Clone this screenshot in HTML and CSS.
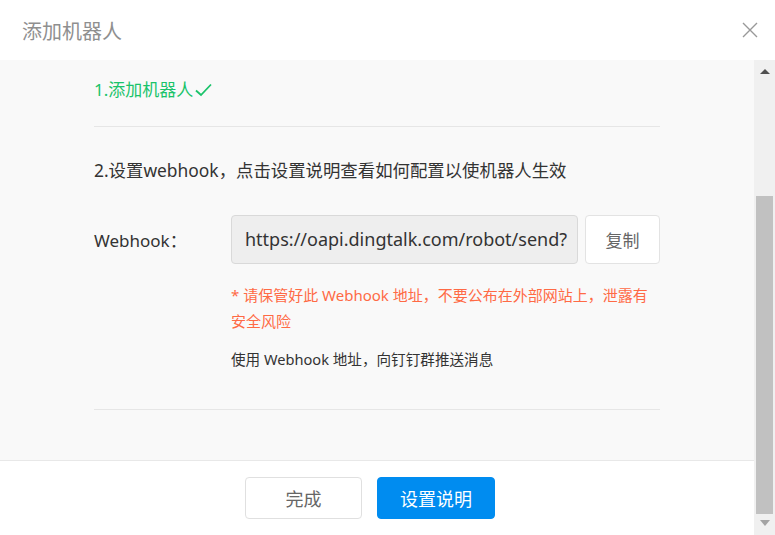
FILE: index.html
```html
<!DOCTYPE html>
<html lang="zh-CN">
<head>
    <meta charset="UTF-8">
    <meta name="viewport" content="width=device-width, initial-scale=1.0">
    <title>添加机器人</title>
    <link rel="stylesheet" href="styles.css">
</head>
<body>
    <div class="dialog">
        <div class="dialog-header">
            <h2 class="dialog-title">添加机器人</h2>
            <button class="close-btn" aria-label="关闭">
                <svg width="16" height="16" viewBox="0 0 16 16">
                    <path d="M1 1 L15 15 M15 1 L1 15" stroke="#999" stroke-width="1.4" fill="none"/>
                </svg>
            </button>
        </div>
        <div class="dialog-wrap">
            <div class="dialog-main">
                <div class="dialog-body">
                    <div class="content">
                        <p class="step step-done">1.添加机器人<svg class="check" width="17" height="14" viewBox="0 0 17 14"><path d="M1 7.5 L6 12 L16 1.5" stroke="#1ac36a" stroke-width="1.8" fill="none"/></svg></p>
                        <div class="divider"></div>
                        <p class="step">2.设置webhook，点击设置说明查看如何配置以使机器人生效</p>
                        <div class="form-row">
                            <label class="form-label">Webhook：</label>
                            <div class="form-input">https://oapi.dingtalk.com/robot/send?</div>
                            <button class="copy-btn">复制</button>
                        </div>
                        <p class="note warn">* 请保管好此 Webhook 地址，不要公布在外部网站上，泄露有安全风险</p>
                        <p class="note info">使用 Webhook 地址，向钉钉群推送消息</p>
                        <div class="divider bottom"></div>
                    </div>
                </div>
                <div class="dialog-footer">
                    <button class="btn">完成</button>
                    <button class="btn btn-primary">设置说明</button>
                </div>
            </div>
            <div class="scrollbar">
                <span class="arrow-up"></span>
                <div class="track"><div class="thumb"></div></div>
                <span class="arrow-down"></span>
            </div>
        </div>
    </div>
</body>
</html>
```

FILE: styles.css
```css
* {
    box-sizing: border-box;
}

body {
    margin: 0;
    padding: 0;
    font-family: "Noto Sans", "Noto Sans CJK SC", sans-serif;
    background: #fff;
    color: #333;
}

.dialog {
    width: 775px;
    height: 535px;
    overflow: hidden;
    background: #fff;
}

.dialog-header {
    height: 60px;
    display: flex;
    align-items: center;
    justify-content: space-between;
    padding: 0 17px 0 22px;
}

.dialog-title {
    margin: 0;
    font-size: 20px;
    font-weight: normal;
    color: #8f8f8f;
}

.close-btn {
    border: none;
    background: none;
    padding: 0;
    width: 16px;
    height: 16px;
    cursor: pointer;
    display: flex;
}

.dialog-wrap {
    display: flex;
    height: 475px;
}

.dialog-main {
    flex: 1;
    display: flex;
    flex-direction: column;
}

.dialog-body {
    background: #f9f9f9;
    height: 401px;
    padding-top: 16px;
    border-bottom: 1px solid #e8e8e8;
}

.content {
    width: 566px;
    margin: 0 auto;
}

.step {
    margin: 0;
    font-size: 17px;
    line-height: 28px;
    color: #333;
}

.step-done {
    color: #1ac36a;
    display: flex;
    align-items: center;
}

.step-done + .divider + .step {
    font-size: 17.4px;
}

.check {
    margin-left: 2px;
}

.divider {
    height: 1px;
    background: #e6e6e6;
    margin: 22px 0 29px;
}

.divider.bottom {
    margin: 37px 0 0;
}

.form-row {
    display: flex;
    align-items: center;
    margin-top: 31px;
    height: 49px;
}

.form-label {
    width: 137px;
    font-size: 17px;
    color: #333;
}

.form-input {
    width: 347px;
    height: 49px;
    line-height: 47px;
    padding: 0 13px;
    background: #eeeeee;
    border: 1px solid #d9d9d9;
    border-radius: 4px;
    font-size: 18px;
    color: #333;
    white-space: nowrap;
    overflow: hidden;
}

.copy-btn {
    margin-left: 7px;
    width: 75px;
    height: 49px;
    background: #fff;
    border: 1px solid #e3e3e3;
    border-radius: 4px;
    font-family: inherit;
    font-size: 17px;
    color: #666;
}

.note {
    margin: 0 0 0 137px;
    font-size: 15px;
    line-height: 26px;
}

.warn {
    margin-top: 18px;
    color: #ff6a45;
}

.info {
    margin-top: 12px;
    font-size: 14.6px;
    color: #333;
}

.dialog-footer {
    flex: 1;
    background: #fff;
    display: flex;
    justify-content: center;
    align-items: flex-start;
    gap: 15px;
    padding: 16px 14px 0 0;
}

.btn {
    width: 117px;
    height: 42px;
    border: 1px solid #e0e0e0;
    border-radius: 4px;
    background: #fff;
    font-family: inherit;
    font-size: 18px;
    color: #666;
    cursor: pointer;
}

.btn-primary {
    width: 118px;
    border-color: #008cf0;
    background: #008cf0;
    color: #fff;
}

.scrollbar {
    width: 21px;
    background: #f0f0f0;
    display: flex;
    flex-direction: column;
    align-items: center;
}

.arrow-up,
.arrow-down {
    width: 0;
    height: 0;
    border-left: 5px solid transparent;
    border-right: 5px solid transparent;
}

.arrow-up {
    margin-top: 9px;
    border-bottom: 5px solid #505050;
}

.arrow-down {
    margin: 6px 0 9px;
    border-top: 6px solid #a3a3a3;
}

.track {
    flex: 1;
    width: 100%;
    display: flex;
    flex-direction: column;
    justify-content: flex-end;
    padding: 0 2px;
}

.thumb {
    height: 318px;
    background: #c1c1c1;
}
```
